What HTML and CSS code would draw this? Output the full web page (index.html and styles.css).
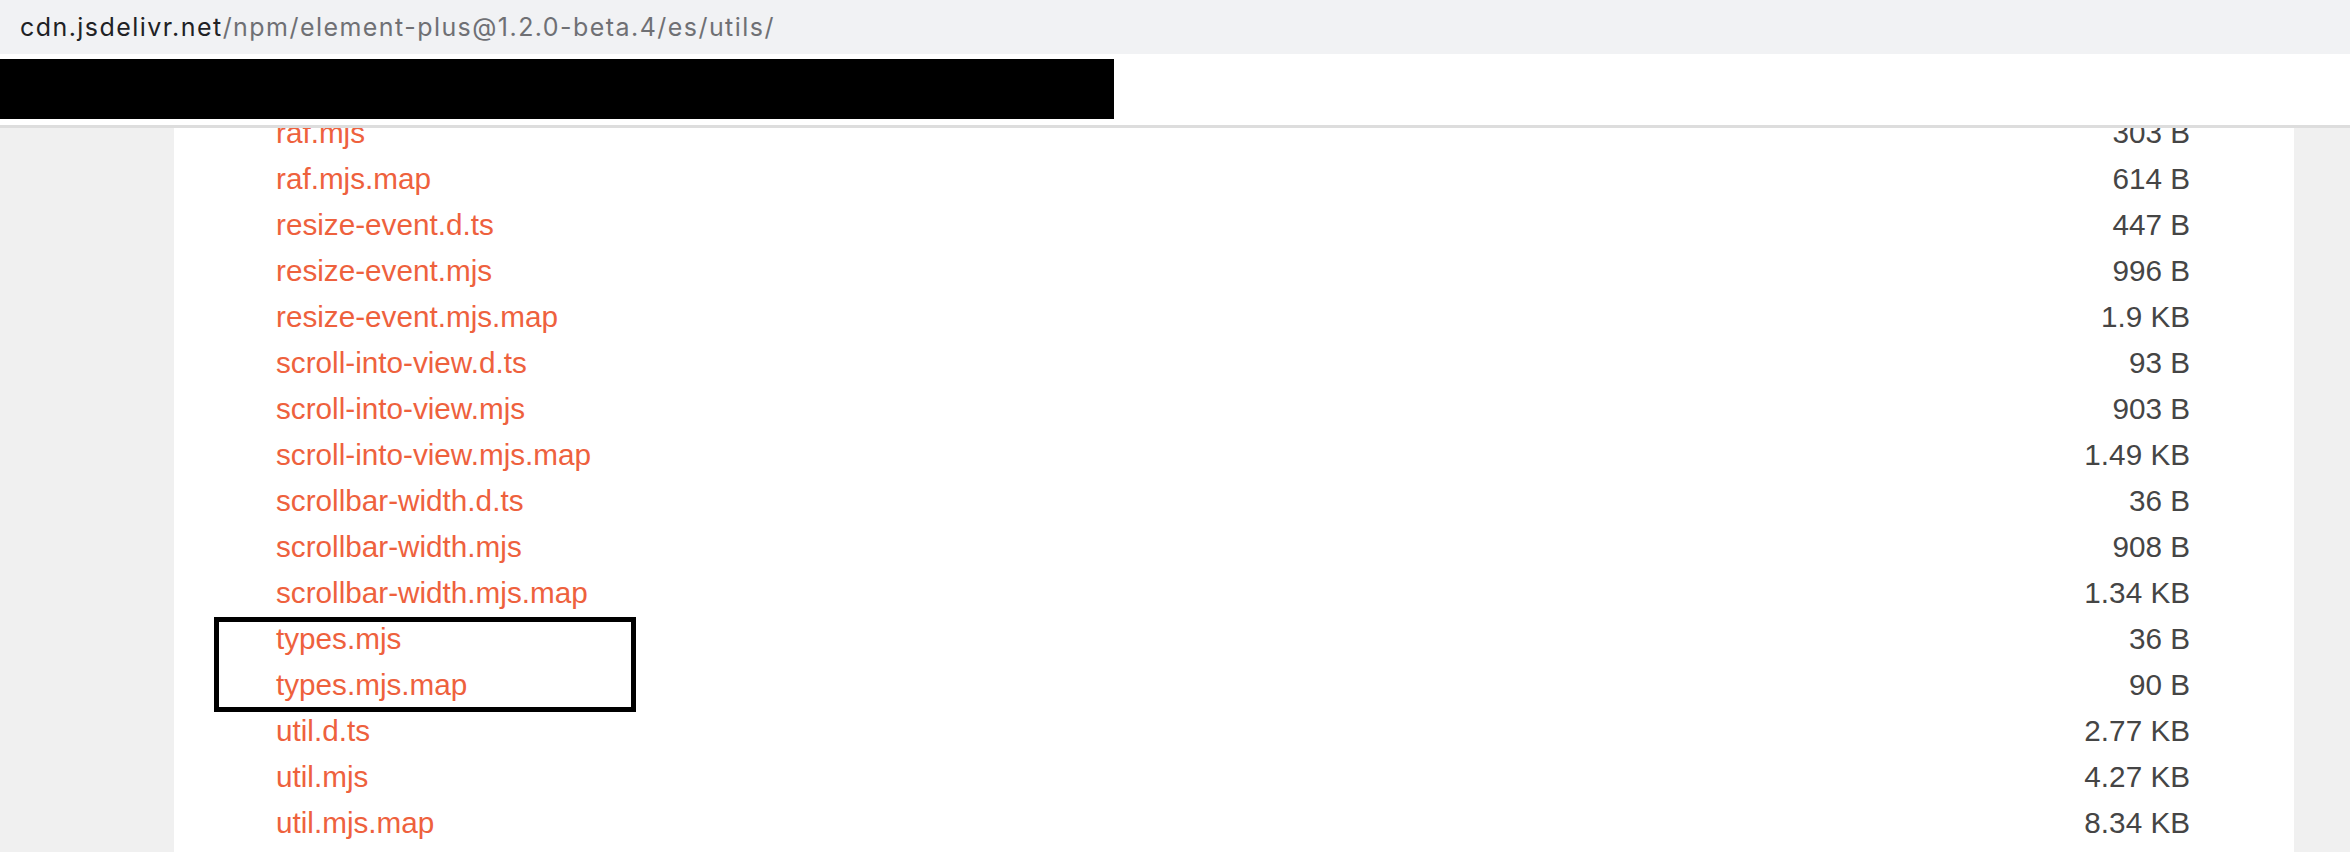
FILE: index.html
```html
<!DOCTYPE html>
<html lang="en">
<head>
    <meta charset="UTF-8">
    <title>element-plus@1.2.0-beta.4 - /es/utils/</title>
    <link rel="stylesheet" href="styles.css">
</head>
<body>
    <header class="browser-bar">
        <div class="url-bar">
            <span class="url-host">cdn.jsdelivr.net</span><span class="url-path">/npm/element-plus@1.2.0-beta.4/es/utils/</span>
        </div>
        <div class="tab-strip">
            <div class="redacted"></div>
        </div>
    </header>

    <main class="page">
        <div class="panel">
            <table class="listing">
                <tbody>
                    <tr><td class="name"><a href="#">raf.mjs</a></td><td class="size">303 B</td></tr>
                    <tr><td class="name"><a href="#">raf.mjs.map</a></td><td class="size">614 B</td></tr>
                    <tr><td class="name"><a href="#">resize-event.d.ts</a></td><td class="size">447 B</td></tr>
                    <tr><td class="name"><a href="#">resize-event.mjs</a></td><td class="size">996 B</td></tr>
                    <tr><td class="name"><a href="#">resize-event.mjs.map</a></td><td class="size">1.9 KB</td></tr>
                    <tr><td class="name"><a href="#">scroll-into-view.d.ts</a></td><td class="size">93 B</td></tr>
                    <tr><td class="name"><a href="#">scroll-into-view.mjs</a></td><td class="size">903 B</td></tr>
                    <tr><td class="name"><a href="#">scroll-into-view.mjs.map</a></td><td class="size">1.49 KB</td></tr>
                    <tr><td class="name"><a href="#">scrollbar-width.d.ts</a></td><td class="size">36 B</td></tr>
                    <tr><td class="name"><a href="#">scrollbar-width.mjs</a></td><td class="size">908 B</td></tr>
                    <tr><td class="name"><a href="#">scrollbar-width.mjs.map</a></td><td class="size">1.34 KB</td></tr>
                    <tr><td class="name"><a href="#">types.mjs</a></td><td class="size">36 B</td></tr>
                    <tr><td class="name"><a href="#">types.mjs.map</a></td><td class="size">90 B</td></tr>
                    <tr><td class="name"><a href="#">util.d.ts</a></td><td class="size">2.77 KB</td></tr>
                    <tr><td class="name"><a href="#">util.mjs</a></td><td class="size">4.27 KB</td></tr>
                    <tr><td class="name"><a href="#">util.mjs.map</a></td><td class="size">8.34 KB</td></tr>
                </tbody>
            </table>
        </div>

        <!-- highlight box drawn over the two types.* rows -->
        <div class="highlight"></div>
    </main>
</body>
</html>
```

FILE: styles.css
```css
:root {
    --bar-bg: #f1f2f4;
    --page-bg: #f0f0f0;
    --panel-bg: #ffffff;
    --divider: #dddddd;
    --link: #ee613d;
    --size-text: #454545;
    --host-text: #202124;
    --path-text: #6f7074;
}

* {
    margin: 0;
    padding: 0;
    box-sizing: border-box;
}

html, body {
    height: 100%;
}

body {
    display: flex;
    flex-direction: column;
    overflow: hidden;
    background-color: var(--page-bg);
    font-family: "Liberation Sans", Arial, sans-serif;
}

/* Browser chrome */
.browser-bar {
    flex: none;
    background-color: #ffffff;
    border-bottom: 3px solid var(--divider);
}

.url-bar {
    height: 54px;
    padding-left: 20px;
    background-color: var(--bar-bg);
    font-family: Inter, "Liberation Sans", sans-serif;
    font-size: 25px;
    line-height: 55px;
    letter-spacing: 1.45px;
    white-space: nowrap;
}

.url-host {
    color: var(--host-text);
}

.url-path {
    color: var(--path-text);
}

.tab-strip {
    height: 71px;
    padding-top: 5px;
}

.redacted {
    width: 1114px;
    height: 60px;
    background-color: #000000;
}

/* Directory listing */
.page {
    flex: 1;
    display: flex;
    min-height: 0;
    position: relative;
    overflow: hidden;
}

.panel {
    flex: none;
    width: 2120px;
    margin-left: 174px;
    padding: 0 104px 0 102px;
    background-color: var(--panel-bg);
}

.listing {
    width: 100%;
    margin-top: -18px;
    border-collapse: collapse;
    font-size: 29.7px;
}

.listing td {
    height: 46px;
    padding: 0;
    line-height: 46px;
    white-space: nowrap;
}

.listing a {
    color: var(--link);
    text-decoration: none;
}

.listing .size {
    text-align: right;
    color: var(--size-text);
}

.highlight {
    position: absolute;
    top: 489px;
    left: 214px;
    width: 422px;
    height: 95px;
    border: 5px solid #000000;
    pointer-events: none;
}
```
